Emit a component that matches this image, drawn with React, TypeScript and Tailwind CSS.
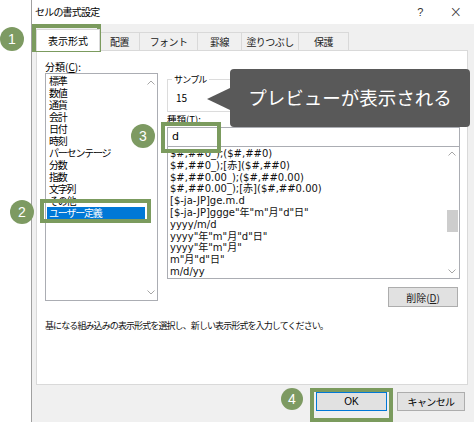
import React from 'react';

const categories = [
  '標準',
  '数値',
  '通貨',
  '会計',
  '日付',
  '時刻',
  'パーセンテージ',
  '分数',
  '指数',
  '文字列',
  'その他',
  'ユーザー定義',
];

const formats = [
  '$#,##0_);($#,##0)',
  '$#,##0_);[赤]($#,##0)',
  '$#,##0.00_);($#,##0.00)',
  '$#,##0.00_);[赤]($#,##0.00)',
  '[$-ja-JP]ge.m.d',
  '[$-ja-JP]ggge"年"m"月"d"日"',
  'yyyy/m/d',
  'yyyy"年"m"月"d"日"',
  'yyyy"年"m"月"',
  'm"月"d"日"',
  'm/d/yy',
];

const tabs = [
  { label: '表示形式', w: 'w-[64px]' },
  { label: '配置', w: 'w-[40px]' },
  { label: 'フォント', w: 'w-[58px]' },
  { label: '罫線', w: 'w-[44px]' },
  { label: '塗りつぶし', w: 'w-[57px]' },
  { label: '保護', w: 'w-[50px]' },
];

// small scroll arrows
const Chevron = ({ up }: { up?: boolean }) => (
  <svg width="8" height="5" viewBox="0 0 8 5" className="text-[#a6a6a6]">
    <polyline
      points={up ? '0.5,4.5 4,1 7.5,4.5' : '0.5,0.5 4,4 7.5,0.5'}
      fill="none"
      stroke="currentColor"
      strokeWidth="1"
    />
  </svg>
);

const Badge = ({ n, className }: { n: number; className: string }) => (
  <div
    className={`absolute flex items-center justify-center rounded-full bg-[#7d9a62] text-white text-[14px] font-['Liberation_Sans',sans-serif] ${className}`}
  >
    {n}
  </div>
);

const App: React.FC = () => {
  return (
    <div className="relative flex w-[474px] h-[422px] overflow-hidden bg-white text-black font-['Noto_Sans_CJK_JP',sans-serif]">
      {/* left margin */}
      <div className="w-[31px] shrink-0" />

      {/* dialog */}
      <div className="flex-1 flex flex-col border-l border-[#a0a0a0]">
        {/* title bar */}
        <div className="h-[24px] shrink-0 flex items-center bg-white pl-[3px] pr-[12px]">
          <span className="text-[10px] leading-none tracking-[-0.8px]">セルの書式設定</span>
          <span className="ml-auto text-[11px] text-[#333] font-['Liberation_Sans',sans-serif]">?</span>
          <span className="ml-[26px] text-[15px] leading-none text-[#333] font-['DejaVu_Sans',sans-serif] font-light">
            ×
          </span>
        </div>

        {/* body */}
        <div className="flex-1 flex flex-col bg-[#f0f0f0] pl-[4px] pr-[6px]">
          {/* tabs */}
          <div className="h-[26px] shrink-0 flex items-end">
            {tabs.map((t, i) =>
              i === 0 ? (
                <div
                  key={t.label}
                  className={`${t.w} h-[22px] -mb-px z-10 flex items-center justify-center bg-white border border-b-0 border-[#d9d9d9] text-[10px]`}
                >
                  {t.label}
                </div>
              ) : (
                <div
                  key={t.label}
                  className={`${t.w} h-[18px] flex items-center justify-center border border-b-0 border-l-0 border-[#d9d9d9] text-[10px] tracking-[-0.6px] text-[#222]`}
                >
                  {t.label}
                </div>
              )
            )}
          </div>

          {/* panel */}
          <div className="h-[335px] shrink-0 flex flex-col bg-white border border-[#d9d9d9] pl-[8px] pr-[6px] pt-[10px]">
            <div className="flex">
              {/* category column */}
              <div className="w-[113px] shrink-0 flex flex-col">
                <div className="h-[12px] text-[10px] leading-[12px]">
                  分類(<span className="underline">C</span>):
                </div>
                <div className="h-[228px] flex border border-[#abadb3] pt-[1px] pl-[1px]">
                  <div className="flex-1 flex flex-col tracking-[-1.2px]">
                    {categories.map(c =>
                      c === 'ユーザー定義' ? (
                        <div
                          key={c}
                          className="h-[12px] leading-[12px] text-[10px] pl-[2px] bg-[#0078d7] text-white"
                        >
                          {c}
                        </div>
                      ) : (
                        <div key={c} className="h-[12px] leading-[12px] text-[10px] pl-[2px]">
                          {c}
                        </div>
                      )
                    )}
                  </div>
                  <div className="w-[12px] flex flex-col items-center justify-between py-[5px]">
                    <Chevron up />
                    <Chevron />
                  </div>
                </div>
              </div>

              {/* type column */}
              <div className="ml-[9px] w-[293px] shrink-0 flex flex-col">
                <fieldset className="mt-[12px] h-[39px] m-0 p-0 border border-[#dcdcdc]">
                  <legend className="ml-[4px] px-[2px] text-[9px] leading-[13px] tracking-[-0.8px]">サンプル</legend>
                  <div className="pl-[8px] pt-[6px] text-[10px] leading-[12px]">15</div>
                </fieldset>
                <div className="h-[15px] text-[9.5px] leading-[13px] pt-[1px]">
                  種類(<span className="underline">T</span>):
                </div>
                <div className="h-[20px] flex items-center border border-[#abadb3] pl-[4px] text-[11px] font-['DejaVu_Sans',sans-serif]">
                  d
                </div>
                <div className="h-[133px] -mt-px flex border border-[#abadb3] overflow-hidden">
                  <div className="flex-1 flex flex-col pt-[1px] pl-[2px] text-[10px] font-['DejaVu_Sans','Noto_Sans_CJK_JP',sans-serif] text-[#111]">
                    {formats.map(f => (
                      <div key={f} className="h-[11.8px] leading-[11.8px] whitespace-nowrap">
                        {f}
                      </div>
                    ))}
                  </div>
                  <div className="w-[14px] flex flex-col items-center pt-[4px] pb-[4px]">
                    <Chevron up />
                    <div className="mt-[54px] w-[11px] h-[22px] bg-[#cdcdcd]" />
                    <div className="mt-auto">
                      <Chevron />
                    </div>
                  </div>
                </div>
                <button className="self-end mt-[8px] mr-[2px] w-[70px] h-[20px] bg-[#e1e1e1] border border-[#adadad] text-[10px] text-[#222]">
                  削除(<span className="underline">D</span>)
                </button>
              </div>
            </div>

            <div className="mt-[12px] text-[9px] leading-[13px] tracking-[-0.9px] text-[#111]">
              基になる組み込みの表示形式を選択し、新しい表示形式を入力してください。
            </div>
          </div>

          {/* footer */}
          <div className="flex-1 flex justify-end items-start pt-[7px] pr-[3px] gap-[10px]">
            <button className="w-[71px] h-[19px] bg-[#e1e1e1] border border-[#0078d7] text-[10px] font-['Liberation_Sans',sans-serif]">
              OK
            </button>
            <button className="w-[68px] h-[19px] bg-[#e1e1e1] border border-[#adadad] text-[10px] tracking-[-0.6px]">
              キャンセル
            </button>
          </div>
        </div>
      </div>

      {/* annotations */}
      <div className="absolute left-[32px] top-[24px] w-[69px] h-[28px] border-[4px] border-[#7b9b5e]" />
      <Badge n={1} className="left-0 top-[27px] w-[24px] h-[24px]" />

      <div className="absolute left-[40px] top-[199px] w-[111px] h-[24px] border-[4px] border-[#7b9b5e]" />
      <Badge n={2} className="left-[10px] top-[200px] w-[24px] h-[24px]" />

      <div className="absolute left-[161px] top-[122px] w-[60px] h-[31px] border-[4px] border-[#7b9b5e]" />
      <Badge n={3} className="left-[131px] top-[124px] w-[24px] h-[24px]" />

      <div className="absolute left-[310px] top-[388px] w-[83px] h-[34px] border-[4px] border-[#7b9b5e]" />
      <Badge n={4} className="left-[281px] top-[388px] w-[22px] h-[22px]" />

      {/* preview callout */}
      <div className="absolute left-[207px] top-[88px] w-0 h-0 border-y-[11px] border-y-transparent border-r-[23px] border-r-[#595959]" />
      <div className="absolute left-[230px] top-[69px] w-[240px] h-[58px] rounded-[4px] bg-[#595959] flex items-center justify-center text-white text-[18.5px]">
        プレビューが表示される
      </div>
    </div>
  );
};

export default App;
